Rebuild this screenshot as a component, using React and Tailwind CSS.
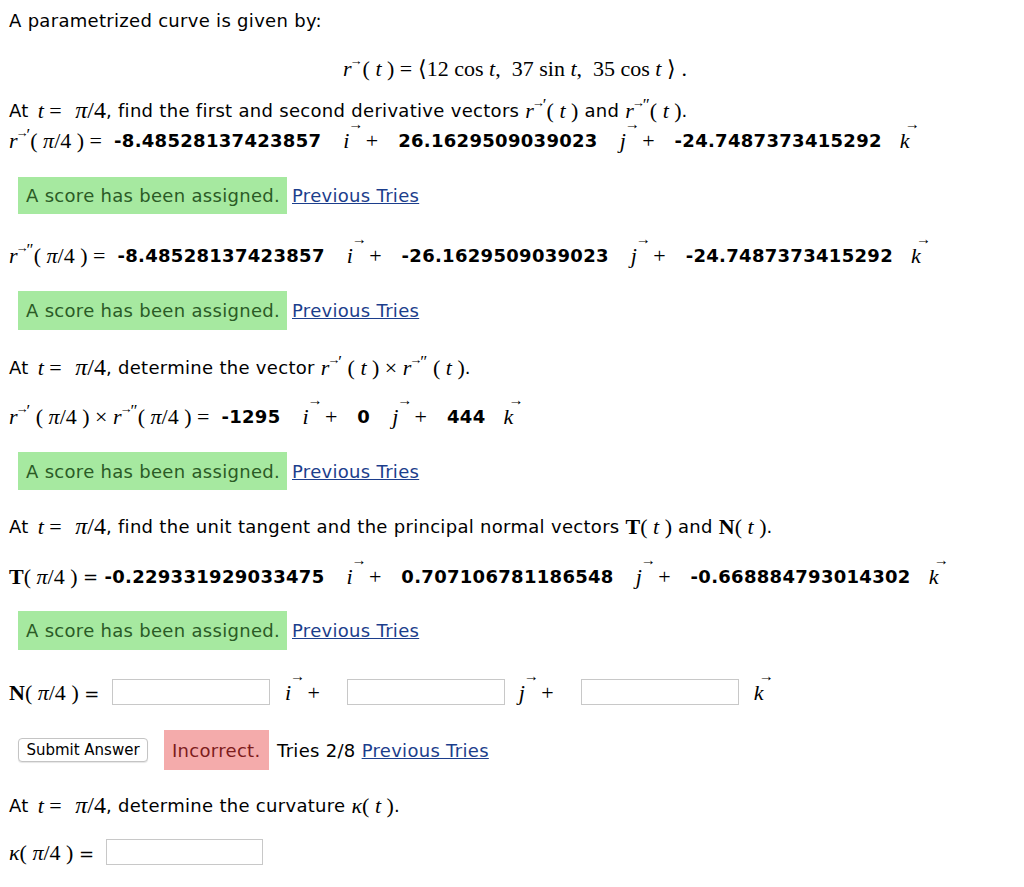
import React from "react";

const serif = "font-['Liberation_Serif','Times_New_Roman',serif]";

function Vec({ c, gap = "ml-[22px]" }) {
    return (
        <span className={`relative inline-block italic ${serif} text-[22px] mr-[16px] ${gap}`}>
            {c}
            <span className="absolute -top-[11px] left-[5px] not-italic text-[15px]">→</span>
        </span>
    );
}

function R({ p = "" }) {
    return (
        <span className={`${serif} text-[22px] tracking-normal`}>
            <i>r</i>
            <span className="relative -top-[11px] -ml-[2px] text-[13px]">→</span>
            {p && <span className="relative -top-[8px] -ml-[2px] text-[17px]">{p}</span>}
        </span>
    );
}

function M({ children, className = "" }) {
    return <span className={`${serif} text-[22px] tracking-normal ${className}`}>{children}</span>;
}

function Plus() {
    return <M className="mr-[20px]">+</M>;
}

function Pi() {
    return (
        <span>
            <i>π</i>/4
        </span>
    );
}

function AtT() {
    return (
        <>
            At
            <M className="ml-[9px]">
                <i>t</i> ={" "}
            </M>
            <M className="ml-[8px] text-[24px]">
                <Pi />
            </M>
        </>
    );
}

function Row({ className = "", children }) {
    return <div className={`flex items-center whitespace-pre ${className}`}>{children}</div>;
}

function Score({ className = "" }) {
    return (
        <div className={`flex items-center ${className}`}>
            <div className="ml-[9px] w-[269px] h-full bg-[#a6e9a0] text-[#2b5b26] flex items-center pl-[8px]">
                A score has been assigned.
            </div>
            <a href="#" className="ml-[5px] text-[#1c3e8c] underline">
                Previous Tries
            </a>
        </div>
    );
}

function Box({ w = "w-[158px]" }) {
    return <input className={`${w} h-[26px] border border-[#c8c8c8] bg-white shrink-0`} />;
}

function Gap({ w }) {
    return <span className={`${w} shrink-0`} />;
}

export default function App() {
    return (
        <div className="font-['DejaVu_Sans','Verdana',sans-serif] text-[18px] tracking-[0.3px] text-black bg-white pl-[9px] pb-[22px] pt-[8px]">
            <Row className="h-[24px]">A parametrized curve is given by:</Row>
            <Row className="h-[24px] mt-[24px] pl-[334px]">
                <R />
                <M>
                    ( <i>t</i> ) = ⟨12 cos <i>t</i>,  37 sin <i>t</i>,  35 cos <i>t</i> ⟩ .
                </M>
            </Row>
            <Row className="h-[24px] mt-[18px]">
                <AtT />, find the first and second derivative vectors <R p="′" />
                <M>( <i>t</i> )</M> and <R p="″" />
                <M>( <i>t</i> )</M>.
            </Row>
            <Row className="h-[24px] mt-[6px]">
                <R p="′" />
                <M>( <Pi /> ) = </M>
                <b> -8.48528137423857</b>
                <Vec c="i" />
                <Plus />
                <b>26.1629509039023</b>
                <Vec c="j" />
                <Plus />
                <b>-24.7487373415292</b>
                <Vec c="k" gap="ml-[18px]" />
            </Row>
            <Score className="h-[37px] mt-[25px]" />
            <Row className="h-[24px] mt-[29px]">
                <R p="″" />
                <M>( <Pi /> ) = </M>
                <b> -8.48528137423857</b>
                <Vec c="i" />
                <Plus />
                <b>-26.1629509039023</b>
                <Vec c="j" />
                <Plus />
                <b>-24.7487373415292</b>
                <Vec c="k" gap="ml-[18px]" />
            </Row>
            <Score className="h-[39px] mt-[24px]" />
            <Row className="h-[24px] mt-[25px]">
                <AtT />, determine the vector <R p="′" />
                <M> ( <i>t</i> ) × </M>
                <R p="″" />
                <M> ( <i>t</i> )</M>.
            </Row>
            <Row className="h-[24px] mt-[25px]">
                <R p="′" />
                <M> ( <Pi /> ) × </M>
                <R p="″" />
                <M>( <Pi /> ) = </M>
                <b> -1295</b>
                <Vec c="i" />
                <Plus />
                <b>0</b>
                <Vec c="j" />
                <Plus />
                <b>444</b>
                <Vec c="k" gap="ml-[18px]" />
            </Row>
            <Score className="h-[38px] mt-[24px]" />
            <Row className="h-[24px] mt-[24px]">
                <AtT />, find the unit tangent and the principal normal vectors{" "}
                <M><b>T</b>( <i>t</i> )</M> and <M><b>N</b>( <i>t</i> )</M>.
            </Row>
            <Row className="h-[24px] mt-[26px]">
                <M><b>T</b>( <Pi /> ) </M>= <b>-0.229331929033475</b>
                <Vec c="i" />
                <Plus />
                <b>0.707106781186548</b>
                <Vec c="j" />
                <Plus />
                <b>-0.668884793014302</b>
                <Vec c="k" gap="ml-[18px]" />
            </Row>
            <Score className="h-[39px] mt-[23px]" />
            <Row className="h-[26px] mt-[29px]">
                <span className="w-[103px] shrink-0">
                    <M><b>N</b>( <Pi /> ) </M>=
                </span>
                <Box />
                <Vec c="i" gap="ml-[15px]" />
                <M>+</M>
                <Gap w="w-[27px]" />
                <Box />
                <Vec c="j" gap="ml-[14px]" />
                <M>+</M>
                <Gap w="w-[27px]" />
                <Box />
                <Vec c="k" gap="ml-[15px]" />
            </Row>
            <Row className="h-[40px] mt-[25px]">
                <button className="ml-[9px] h-[24px] w-[130px] border border-[#c4c4c4] rounded-[4px] bg-white text-[15px] tracking-normal shadow-[0_1px_1px_rgba(0,0,0,0.1)]">
                    Submit Answer
                </button>
                <div className="ml-[16px] h-full w-[105px] bg-[#f4abab] text-[#7d1c1c] flex items-center pl-[8px]">
                    Incorrect.
                </div>
                <span className="ml-[8px]">Tries 2/8 </span>
                <a href="#" className="text-[#1c3e8c] underline">
                    Previous Tries
                </a>
            </Row>
            <Row className="h-[24px] mt-[23px]">
                <AtT />, determine the curvature <M><i>κ</i>( <i>t</i> )</M>.
            </Row>
            <Row className="h-[26px] mt-[22px]">
                <span className="w-[97px] shrink-0">
                    <M><i>κ</i>( <Pi /> ) </M>=
                </span>
                <Box w="w-[157px]" />
            </Row>
        </div>
    );
}
